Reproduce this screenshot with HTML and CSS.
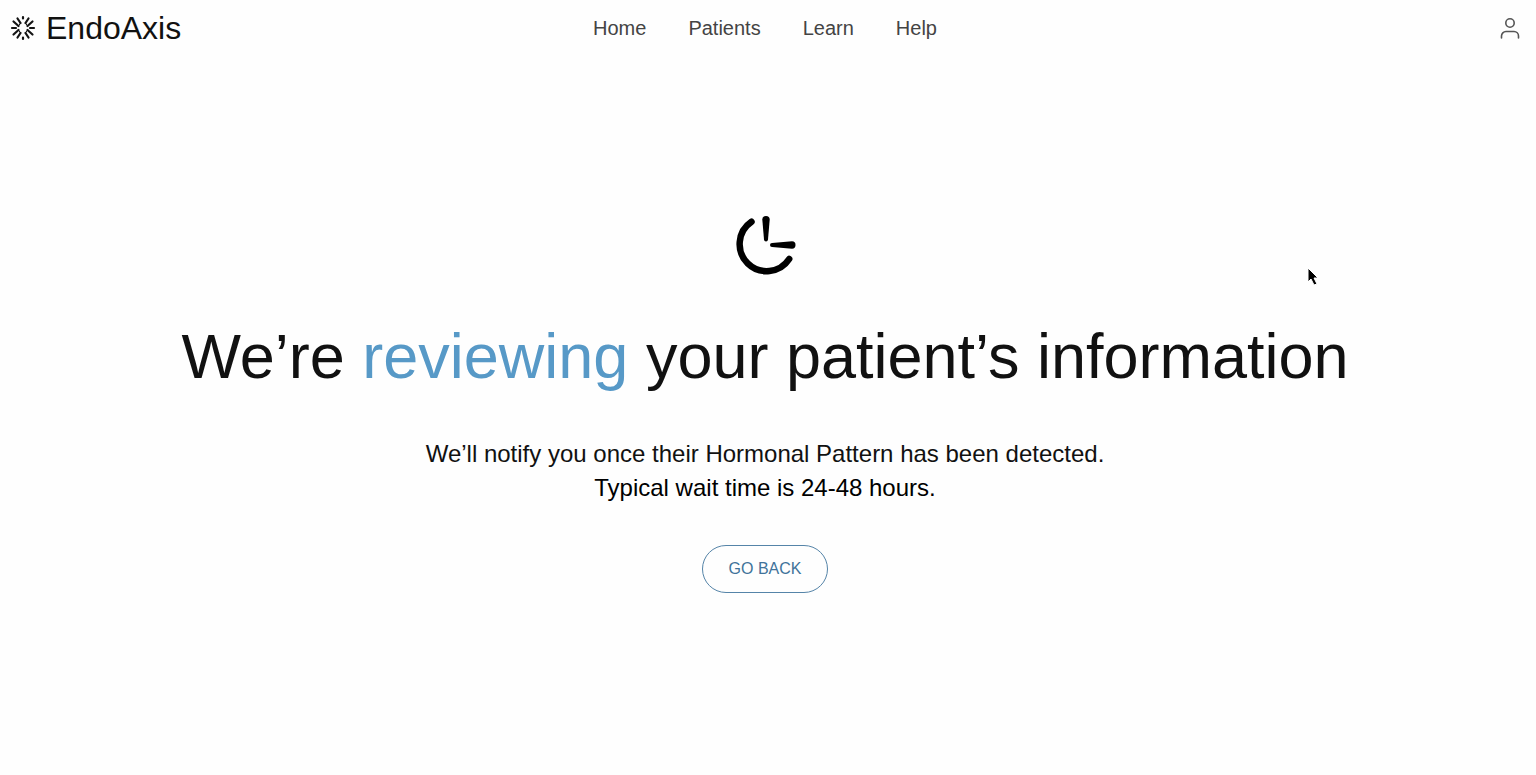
FILE: index.html
```html
<!DOCTYPE html>
<html lang="en">
  <head>
    <meta charset="UTF-8">
    <meta name="viewport" content="width=device-width, initial-scale=1.0">
    <title>EndoAxis</title>
    <link rel="stylesheet" href="styles.css">
  </head>
  <body>
    <header class="header">
      <a class="logo" href="#">
        <svg class="logo-icon" viewBox="0 0 26 26" aria-hidden="true">
          <g fill="none" stroke="#151515" stroke-width="2.200" stroke-linecap="round">
            <path d="M13 2v1.500M13 22.500v1.500M2 13h4M20 13h4"/>
            <path d="M3.500 6.500l5 4.500M7.500 3.500l3 4.500M22.500 6.500l-5 4.500M18.500 3.500l-3 4.500"/>
            <path d="M3.500 19.500l5-4.500M7.500 22.500l3-4.500M22.500 19.500l-5-4.500M18.500 22.500l-3-4.500"/>
            <path d="M8.500 11l2-3M17.500 11l-2-3M8.500 15l2 3M17.500 15l-2 3" stroke-width="1"/>
          </g>
        </svg>
        <span class="logo-text">EndoAxis</span>
      </a>
      <nav class="nav">
        <a class="nav-link" href="#">Home</a>
        <a class="nav-link" href="#">Patients</a>
        <a class="nav-link" href="#">Learn</a>
        <a class="nav-link" href="#">Help</a>
      </nav>
      <a class="account" href="#" aria-label="Account">
        <svg class="account-icon" viewBox="0 0 20 22" aria-hidden="true">
          <circle cx="10" cy="6" r="4.200"/>
          <path d="M1.500 21v-2a4.500 4.500 0 0 1 4.500-4.500h8a4.500 4.500 0 0 1 4.500 4.500v2"/>
        </svg>
      </a>
    </header>

    <main class="main">
      <svg class="clock" viewBox="0 0 62 62" aria-hidden="true">
        <path class="clock-ring" d="M17.500 6.800A27 27 0 1 0 55.200 44"/>
        <path d="M28.300 4.500q0-3.500 3.700-3.500t3.700 3.500l-1.700 20q-.2 2-2 2t-2-2z"/>
        <path d="M58 26.300q3.500 0 3.500 3.700t-3.500 3.700l-20-1.700q-2-.2-2-2t2-2z"/>
      </svg>
      <h1 class="title">We’re <span class="title-accent">reviewing</span> your patient’s information</h1>
      <p class="text">We’ll notify you once their Hormonal Pattern has been detected.<br><span class="text-strong">Typical wait time is 24-48 hours.</span></p>
      <button class="back-btn" type="button">GO BACK</button>
    </main>

    <svg class="pointer" viewBox="0 0 12 20" aria-hidden="true">
      <path d="M1 1v14l3-3 3 6 3-1-3-6h4z" fill="#000" stroke="#fff"/>
    </svg>
  </body>
</html>
```
FILE: styles.css
```css
* {
  margin: 0;
  padding: 0;
  box-sizing: border-box;
}
body {
  position: relative;
  min-height: 100vh;
  padding-right: 6px;
  background-color: #fefefe;
  color: #111;
  font-family: "Liberation Sans", Arial, sans-serif;
}
a {
  color: inherit;
  text-decoration: none;
}
.header {
  display: grid;
  grid-template-columns: 1fr auto 1fr;
  align-items: center;
  height: 56px;
  padding: 0 10px;
}
.logo {
  display: flex;
  align-items: center;
  gap: 10px;
}
.logo-icon {
  width: 26px;
  height: 26px;
}
.logo-text {
  font-size: 32px;
}
.nav {
  display: flex;
  gap: 42px;
}
.nav-link {
  font-size: 20px;
  color: #444;
}
.account {
  justify-self: end;
  display: flex;
}
.account-icon {
  width: 20px;
  height: 22px;
  fill: none;
  stroke: #555;
  stroke-width: 1.6;
  stroke-linecap: round;
}
.main {
  display: flex;
  flex-direction: column;
  align-items: center;
  padding: 159px 24px 24px;
  text-align: center;
}
.clock {
  width: 62px;
  height: 62px;
}
.clock-ring {
  fill: none;
  stroke: #000;
  stroke-width: 6.5;
  stroke-linecap: round;
}
.title {
  margin-top: 40px;
  font-size: 63px;
  line-height: 78px;
  font-weight: 400;
}
.title-accent {
  color: #5799c7;
}
.text {
  margin-top: 42px;
  font-size: 24px;
  line-height: 34px;
}
.text-strong {
  color: #000;
}
.back-btn {
  height: 48px;
  margin-top: 40px;
  padding: 0 26px;
  border: 1px solid #5584a8;
  border-radius: 24px;
  background-color: transparent;
  color: #41739a;
  font-family: inherit;
  font-size: 16px;
  cursor: pointer;
}
/* mouse pointer over the page */
.pointer {
  position: absolute;
  left: 1307px;
  top: 267px;
  width: 12px;
  height: 20px;
}
```
